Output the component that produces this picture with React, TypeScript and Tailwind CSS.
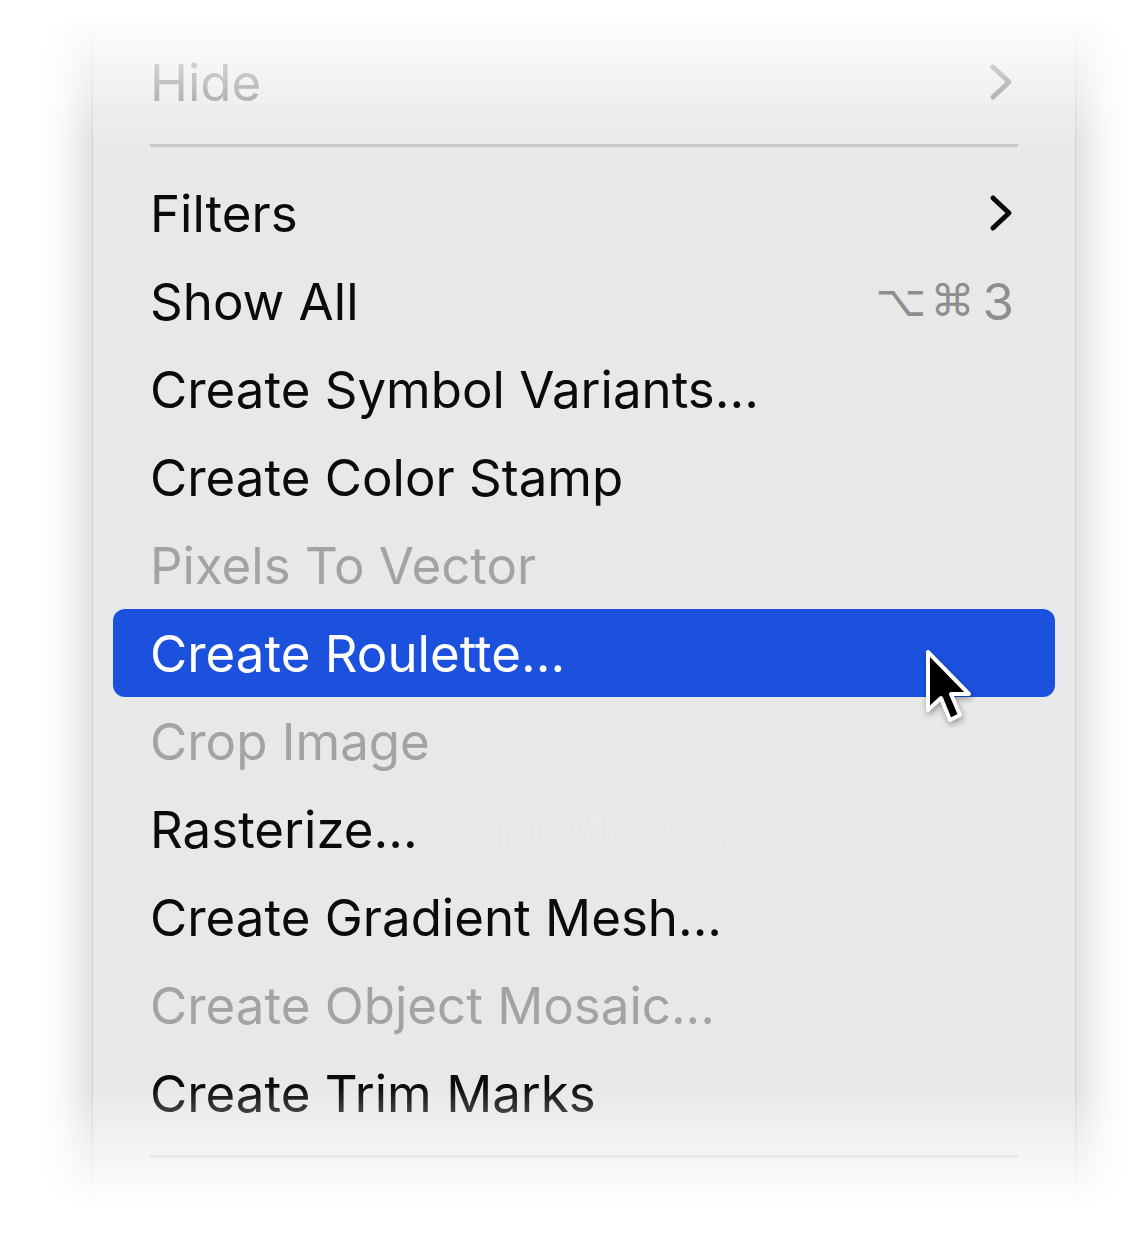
import React from 'react'

type Item = {
  label: string
  disabled?: boolean
  submenu?: boolean
  shortcut?: boolean
  active?: boolean
  ghost?: string
  faded?: boolean
}

const items: (Item | 'sep')[] = [
  { label: 'Hide', submenu: true, disabled: true, faded: true },
  'sep',
  { label: 'Filters', submenu: true },
  { label: 'Show All', shortcut: true },
  { label: 'Create Symbol Variants...' },
  { label: 'Create Color Stamp' },
  { label: 'Pixels To Vector', disabled: true },
  { label: 'Create Roulette...', active: true },
  { label: 'Crop Image', disabled: true },
  { label: 'Rasterize...', ghost: 'dient Mesh...' },
  { label: 'Create Gradient Mesh...' },
  { label: 'Create Object Mosaic...', disabled: true },
  { label: 'Create Trim Marks' },
  'sep',
  { label: 'Make Pixel Perfect', disabled: true },
]

function Chevron({ color }: { color: string }) {
  return (
    <svg width="26" height="38" viewBox="0 0 26 38" fill="none">
      <path d="M5 4 L21 19 L5 34" stroke={color} strokeWidth="5" strokeLinecap="round" strokeLinejoin="round" />
    </svg>
  )
}

function Cursor() {
  return (
    <svg width="60" height="86" viewBox="0 0 60 86" className="absolute left-[922px] top-[648px] drop-shadow-[1px_3px_3px_rgba(0,0,0,0.35)]">
      <path
        d="M6 4 L6 62 L19 50 L28 72 L38 67 L29 46 L47 46 Z"
        fill="#000"
        stroke="#fff"
        strokeWidth="4"
        strokeLinejoin="round"
      />
    </svg>
  )
}

function Row({ item }: { item: Item }) {
  const textColor = item.active
    ? 'text-white'
    : item.faded
      ? 'text-[#8a8a8a]'
      : item.disabled
        ? 'text-[#a3a3a3]'
        : 'text-[#0b0b0b]'
  return (
    <div className="h-[88px] px-[20px]">
      <div
        className={`relative flex h-full items-center justify-between rounded-[12px] pl-[37px] pr-[41px] ${
          item.active ? 'bg-[#1b51dd]' : ''
        }`}
      >
        <span className={`relative ${textColor}`}>{item.label}</span>
        {item.ghost && (
          <span className="absolute left-[312px] top-[18px] text-[#eaeaea]">{item.ghost}</span>
        )}
        {item.submenu && <Chevron color={item.faded ? '#858585' : '#0b0b0b'} />}
        {item.shortcut && (
          <span className="flex items-center gap-[4px] text-[#8e8e8e]" style={{ fontFamily: '"DejaVu Sans", Inter, sans-serif' }}>
            <span className="text-[44px]">⌥</span>
            <span className="text-[44px]">⌘</span>
            <span className="ml-[4px]" style={{ fontFamily: 'Inter, sans-serif' }}>3</span>
          </span>
        )}
      </div>
    </div>
  )
}

export default function App() {
  return (
    <div className="relative h-[1236px] w-[1140px] overflow-hidden bg-white">
      <div
        className="ml-[92px] h-full w-[984px] border-x border-[#cfcfcf] bg-[#e8e8e8] pt-[38px] text-[51px] leading-none shadow-[0_0_40px_12px_rgba(0,0,0,0.16)]"
        style={{ fontFamily: 'Inter, "Noto Sans", sans-serif' }}
      >
        {items.map((it, i) =>
          it === 'sep' ? (
            <div key={i} className="px-[57px] pb-[22px] pt-[18px]">
              <div className="h-[3px] bg-[#c6c6c6]" />
            </div>
          ) : (
            <Row key={i} item={it} />
          )
        )}
      </div>

      <Cursor />

      {/* fade top and bottom */}
      <div className="pointer-events-none absolute inset-x-0 top-0 h-[30px] bg-gradient-to-b from-white from-[40%] to-white/85" />
      <div className="pointer-events-none absolute inset-x-0 top-[30px] h-[120px] bg-gradient-to-b from-white/85 to-transparent" />
      <div className="pointer-events-none absolute inset-x-0 bottom-0 h-[150px] bg-gradient-to-t from-white from-[20%] to-transparent" />
    </div>
  )
}
